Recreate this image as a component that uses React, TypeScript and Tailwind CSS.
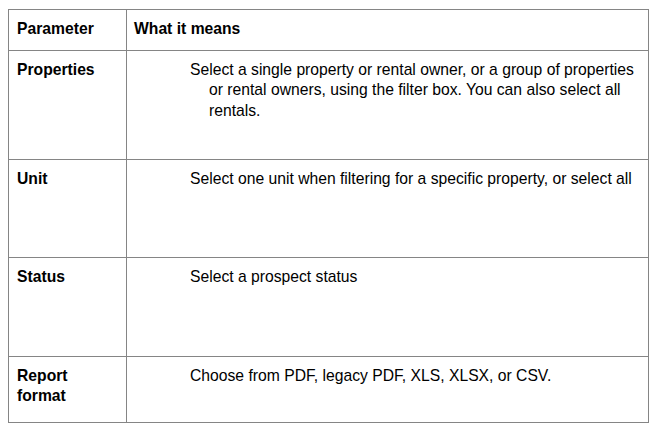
import React from "react";

const rows: { name: string[]; text: string; h: string }[] = [
  {
    name: ["Properties"],
    text:
      "Select a single property or rental owner, or a group of properties or rental owners, using the filter box. You can also select all rentals.",
    h: "h-[109px]",
  },
  {
    name: ["Unit"],
    text: "Select one unit when filtering for a specific property, or select all",
    h: "h-[98px]",
  },
  { name: ["Status"], text: "Select a prospect status", h: "h-[99px]" },
  {
    name: ["Report", "format"],
    text: "Choose from PDF, legacy PDF, XLS, XLSX, or CSV.",
    h: "h-[66px]",
  },
];

export default function App() {
  return (
    <div
      className="w-[660px] h-[434px] bg-white text-black pt-[9px] pl-[8px] text-[15.7px] leading-[20.3px]"
      style={{ fontFamily: '"Liberation Sans", Arial, sans-serif' }}
    >
      <div className="grid grid-cols-[118px_522px] w-[641px] border-l border-t border-[#858585]">
        <div className="h-[41px] border-r border-b border-[#858585] pl-[8px] pt-[9px] font-bold">
          Parameter
        </div>
        <div className="h-[41px] border-r border-b border-[#858585] pl-[7px] pt-[9px] font-bold">
          What it means
        </div>
        {rows.map((r) => (
          <React.Fragment key={r.text}>
            <div className={`${r.h} border-r border-b border-[#858585] pl-[8px] pt-[9px] font-bold`}>
              {r.name.map((n) => (
                <div key={n}>{n}</div>
              ))}
            </div>
            <div className={`${r.h} border-r border-b border-[#858585] pl-[82px] pr-[8px] pt-[9px]`}>
              <p className="-indent-[19px]">{r.text}</p>
            </div>
          </React.Fragment>
        ))}
      </div>
    </div>
  );
}
